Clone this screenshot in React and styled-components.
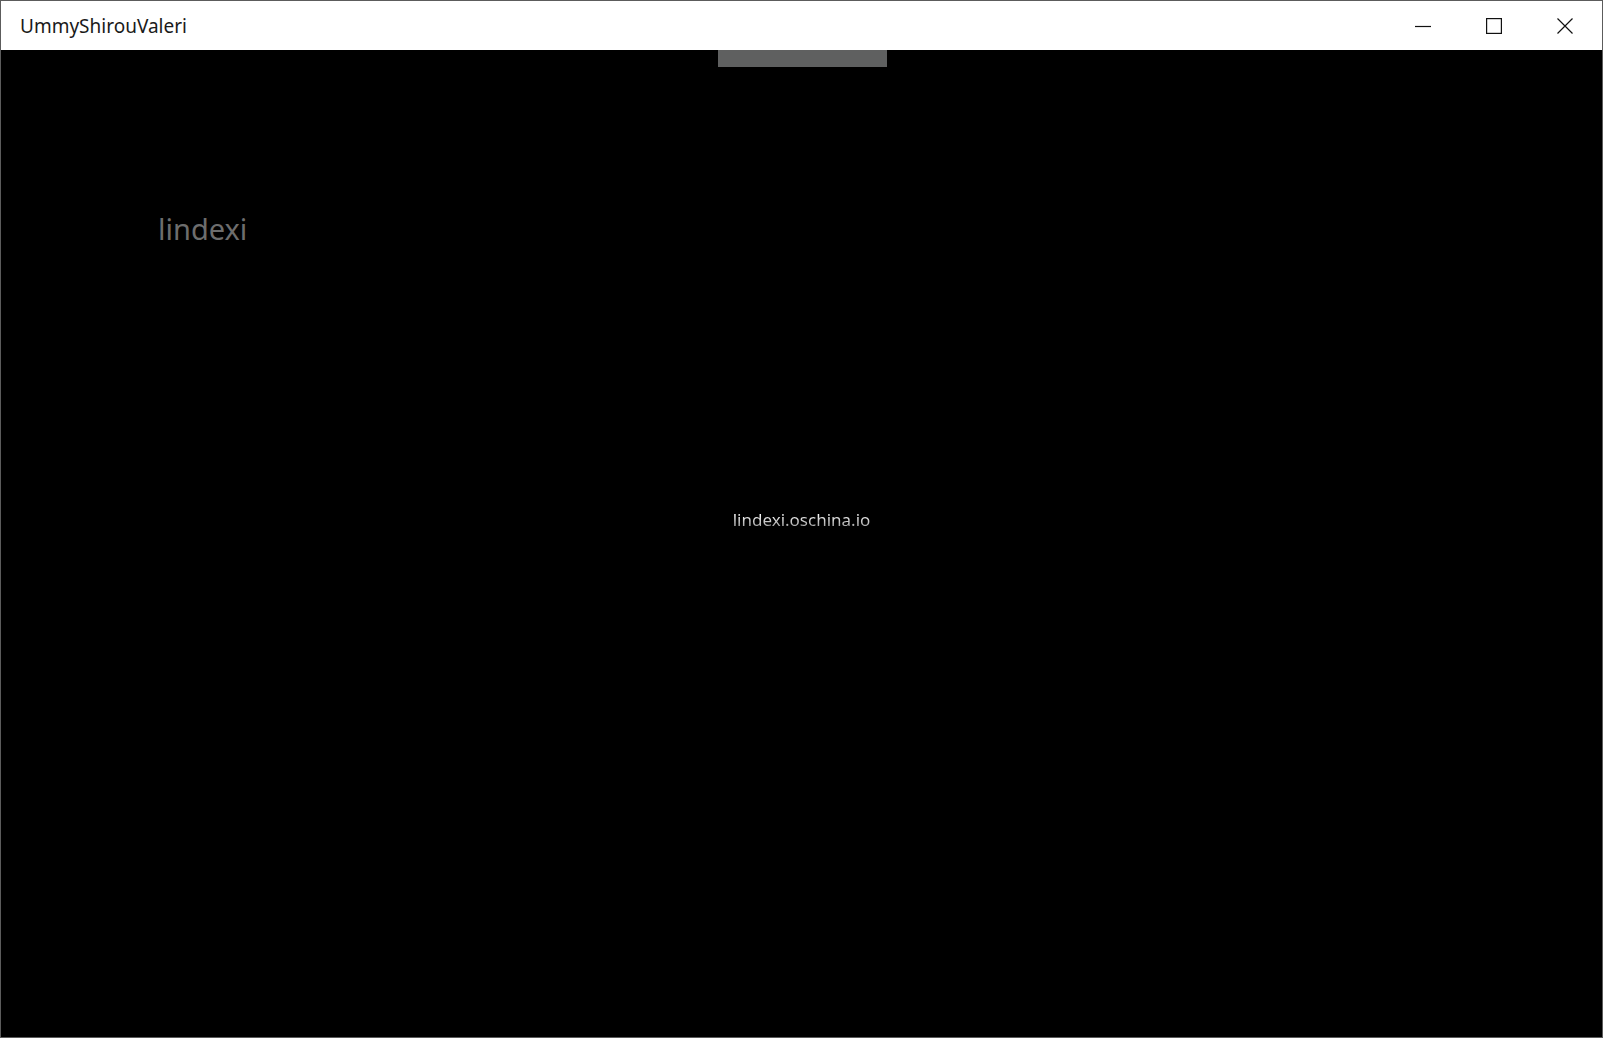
import React from 'react';
import styled, { createGlobalStyle } from 'styled-components';

const GlobalStyle = createGlobalStyle`
  * { box-sizing: border-box; }
  html, body { margin: 0; padding: 0; height: 100%; background: #000; }
  #root { height: 100%; }
`;

const Window = styled.div`
  display: flex;
  flex-direction: column;
  height: 100vh;
  border: 1px solid #5c5c5c;
  font-family: 'Noto Sans', 'Open Sans', sans-serif;
  overflow: hidden;
`;

const TitleBar = styled.div`
  display: flex;
  align-items: center;
  height: 49px;
  flex-shrink: 0;
  padding-right: 2px;
  background: #ffffff;
`;

const Title = styled.div`
  flex: 1;
  padding-left: 19px;
  font-size: 19px;
  color: #1a1a1a;
`;

const ControlButton = styled.div`
  display: flex;
  align-items: center;
  justify-content: center;
  width: 71px;
  height: 49px;
  color: #111;
`;

const Content = styled.div`
  flex: 1;
  display: flex;
  flex-direction: column;
  background: #000;
`;

const TopStrip = styled.div`
  align-self: center;
  width: 169px;
  height: 17px;
  margin-left: 2px;
  background: #5f6060;
`;

const Heading = styled.div`
  margin: 142px 0 0 157px;
  font-size: 29px;
  line-height: 40px;
  color: #6d6d6d;
`;

const Link = styled.div`
  align-self: center;
  margin-top: 261px;
  font-size: 17px;
  line-height: 20px;
  background: linear-gradient(#ffffff 20%, #8a8a8a);
  -webkit-background-clip: text;
  background-clip: text;
  color: transparent;
`;

function Icon({ kind }) {
  if (kind === 'min') {
    return (
      <svg width="16" height="16" viewBox="0 0 16 16">
        <path d="M0 8.5H16" stroke="currentColor" strokeWidth="1.2" />
      </svg>
    );
  }
  if (kind === 'max') {
    return (
      <svg width="16" height="16" viewBox="0 0 16 16">
        <rect x="0.6" y="0.6" width="14.8" height="14.8" fill="none" stroke="currentColor" strokeWidth="1.2" />
      </svg>
    );
  }
  return (
    <svg width="16" height="16" viewBox="0 0 16 16">
      <path d="M0.5 0.5L15.5 15.5M15.5 0.5L0.5 15.5" stroke="currentColor" strokeWidth="1.2" />
    </svg>
  );
}

export default function App() {
  return (
    <>
      <GlobalStyle />
      <Window>
        <TitleBar>
          <Title>UmmyShirouValeri</Title>
          <ControlButton><Icon kind="min" /></ControlButton>
          <ControlButton><Icon kind="max" /></ControlButton>
          <ControlButton><Icon kind="close" /></ControlButton>
        </TitleBar>
        <Content>
          <TopStrip />
          <Heading>lindexi</Heading>
          <Link>lindexi.oschina.io</Link>
        </Content>
      </Window>
    </>
  );
}
